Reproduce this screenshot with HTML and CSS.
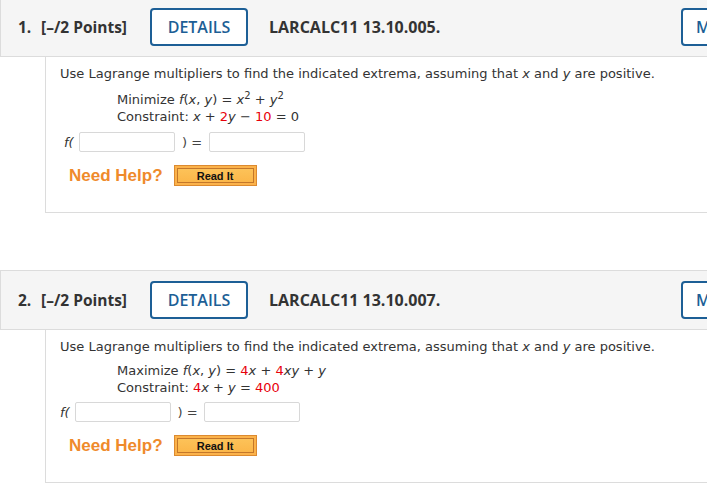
FILE: index.html
```html
<!DOCTYPE html>
<html lang="en">
<head>
    <meta charset="UTF-8">
    <title>Assignment</title>
    <link rel="stylesheet" href="styles.css">
</head>
<body>
    <div class="page">
        <div class="question">
            <div class="q-header">
                <span class="q-num">1.</span>
                <span class="q-points">[&ndash;/2 Points]</span>
                <button class="btn-outline">DETAILS</button>
                <span class="q-ref">LARCALC11 13.10.005.</span>
                <button class="btn-outline btn-notes">MY NOTES</button>
            </div>
            <div class="q-body">
                <p class="prompt">Use Lagrange multipliers to find the indicated extrema, assuming that <i>x</i> and <i>y</i> are positive.</p>
                <div class="eq">
                    <div>Minimize <i>f</i>(<i>x</i>, <i>y</i>) = <i>x</i><sup>2</sup> + <i>y</i><sup>2</sup></div>
                    <div>Constraint: <i>x</i> + <span class="red">2</span><i>y</i> &minus; <span class="red">10</span> = 0</div>
                </div>
                <div class="answer">
                    <span class="fn">f(</span>
                    <input type="text" class="ans-box">
                    <span class="eq-sign">) =</span>
                    <input type="text" class="ans-box">
                </div>
                <div class="help">
                    <span class="need-help">Need Help?</span>
                    <button class="read-it">Read It</button>
                </div>
            </div>
        </div>

        <div class="question q-plain">
            <div class="q-header">
                <span class="q-num">2.</span>
                <span class="q-points">[&ndash;/2 Points]</span>
                <button class="btn-outline">DETAILS</button>
                <span class="q-ref">LARCALC11 13.10.007.</span>
                <button class="btn-outline btn-notes">MY NOTES</button>
            </div>
            <div class="q-body">
                <p class="prompt">Use Lagrange multipliers to find the indicated extrema, assuming that <i>x</i> and <i>y</i> are positive.</p>
                <div class="eq">
                    <div>Maximize <i>f</i>(<i>x</i>, <i>y</i>) = <span class="red">4</span><i>x</i> + <span class="red">4</span><i>xy</i> + <i>y</i></div>
                    <div>Constraint: <span class="red">4</span><i>x</i> + <i>y</i> = <span class="red">400</span></div>
                </div>
                <div class="answer">
                    <span class="fn">f(</span>
                    <input type="text" class="ans-box">
                    <span class="eq-sign">) =</span>
                    <input type="text" class="ans-box">
                </div>
                <div class="help">
                    <span class="need-help">Need Help?</span>
                    <button class="read-it">Read It</button>
                </div>
            </div>
        </div>
    </div>
</body>
</html>
```

FILE: styles.css
```css
body {
    margin: 0;
    background: #ffffff;
    overflow: hidden;
}

.page {
    width: 802px;
    margin-top: -3px;
}

.question {
    margin-bottom: 57px;
}

.q-header {
    display: flex;
    align-items: center;
    padding: 10px 10px 10px 17px;
    background: #f5f5f5;
    border: 1px solid #dcdcdc;
    font-family: "Open Sans", sans-serif;
    font-weight: 700;
    font-size: 15.5px;
    color: #333333;
}

.q-num {
    width: 23px;
}

.q-points {
    width: 109px;
}

.btn-outline {
    height: 38px;
    width: 98px;
    padding: 0;
    border: 2px solid #1d5f96;
    border-radius: 4px;
    background: #ffffff;
    color: #1d5f96;
    font-family: "Open Sans", sans-serif;
    font-weight: 600;
    font-size: 16px;
}

.q-ref {
    margin-left: 21px;
    font-size: 16px;
}

.btn-notes {
    margin-left: auto;
    width: 110px;
    text-align: left;
    padding-left: 13px;
}

.q-body {
    margin-left: 45px;
    padding: 8px 14px 26px;
    border-left: 1px solid #dcdcdc;
    border-bottom: 1px solid #dcdcdc;
    font-family: "DejaVu Sans", Verdana, sans-serif;
    font-size: 13px;
    line-height: 17px;
    color: #333333;
}

.prompt {
    margin: 0;
}

.eq {
    margin: 9px 0 0 57px;
}

.q-plain .eq {
    margin-top: 7px;
}

sup {
    font-size: 10px;
    line-height: 0;
}

.red {
    color: #e8000b;
}

.answer {
    display: flex;
    align-items: center;
    margin-top: 7px;
    padding-left: 4px;
}

.q-plain .answer {
    margin-top: 6px;
    padding-left: 0;
}

.fn {
    font-style: italic;
    width: 15px;
}

.ans-box {
    width: 96px;
    height: 20px;
    box-sizing: border-box;
    border: 1px solid #d8d8d8;
    border-radius: 2px;
    margin: 0;
}

.eq-sign {
    width: 34px;
    text-align: center;
    color: #444444;
}

.q-plain .eq-sign {
    width: 33px;
}

.help {
    display: flex;
    align-items: center;
    margin-top: 13px;
    padding-left: 9px;
}

.need-help {
    font-family: "Liberation Sans", Arial, sans-serif;
    font-weight: 700;
    font-size: 17px;
    color: #ef8a2b;
    margin-right: 11px;
}

.read-it {
    width: 83px;
    height: 21px;
    padding: 0;
    border: 1px solid #dc8a30;
    background: linear-gradient(#fdc55c, #fbb446);
    box-shadow: inset 0 0 0 2px #fbb24a, inset 0 0 0 3px #c4772a;
    font-family: "Liberation Sans", Arial, sans-serif;
    font-weight: 700;
    font-size: 11px;
    color: #111111;
}
```
